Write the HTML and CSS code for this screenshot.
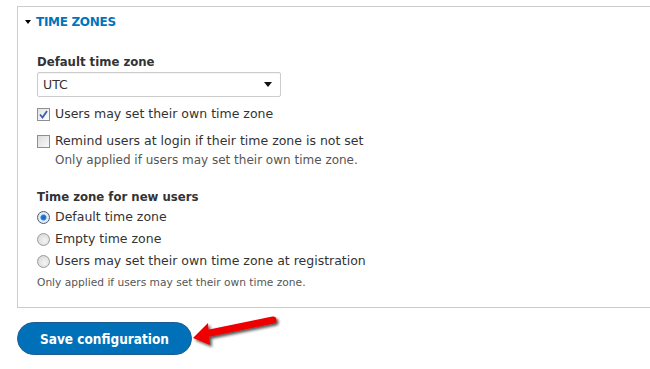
FILE: index.html
```html
<!DOCTYPE html>
<html>
<head>
<meta charset="utf-8">
<link rel="stylesheet" href="styles.css">
</head>
<body>
<div class="page">
  <div class="fieldset">
    <div class="legend"><span class="caret"></span><span class="legend-text">TIME ZONES</span></div>
    <div class="content">
      <div class="label">Default time zone</div>
      <div class="select"><span>UTC</span><span class="select-arrow"></span></div>
      <div class="option opt-first"><span class="checkbox checked"><svg width="9" height="9" viewBox="0 0 9 9"><path d="M1 4.5 L3.5 7.5 L8 1" fill="none" stroke="#3a5db0" stroke-width="1.8"/></svg></span>Users may set their own time zone</div>
      <div class="option opt-second"><span class="checkbox"></span>Remind users at login if their time zone is not set</div>
      <div class="desc indent">Only applied if users may set their own time zone.</div>
      <div class="label label-second">Time zone for new users</div>
      <div class="radio-row"><span class="radio selected"></span>Default time zone</div>
      <div class="radio-row"><span class="radio"></span>Empty time zone</div>
      <div class="radio-row"><span class="radio"></span>Users may set their own time zone at registration</div>
      <div class="desc desc-last">Only applied if users may set their own time zone.</div>
    </div>
  </div>
  <div class="actions">
    <button class="save">Save configuration</button>
    <svg class="arrow" width="100" height="50" viewBox="0 0 100 50">
      <defs>
        <filter id="sh" x="-20%" y="-20%" width="150%" height="160%">
          <feGaussianBlur in="SourceAlpha" stdDeviation="1.5"/>
          <feOffset dx="2" dy="2" result="b"/>
          <feComponentTransfer><feFuncA type="linear" slope="0.7"/></feComponentTransfer>
          <feMerge><feMergeNode/><feMergeNode in="SourceGraphic"/></feMerge>
        </filter>
      </defs>
      <g filter="url(#sh)">
        <path d="M17 21 L85 7" stroke="#ee0000" stroke-width="7" stroke-linecap="round" fill="none"/>
        <path d="M5 25 L20 10 L22 32 Z" fill="#ee0000"/>
      </g>
    </svg>
  </div>
</div>
</body>
</html>
```
FILE: styles.css
```css
html, body {
  margin: 0;
  padding: 0;
  background: #fff;
}
body {
  font-family: "DejaVu Sans", Verdana, sans-serif;
  color: #333;
  font-size: 12.5px;
}
.page {
  padding: 6px 0 0 17px;
}
.fieldset {
  border: 1px solid #cccccc;
  border-right: none;
  padding: 0 0 16px 0;
}
.legend {
  display: flex;
  align-items: center;
  height: 16px;
  margin-top: 7px;
  padding-left: 7px;
}
.caret {
  width: 0;
  height: 0;
  border-left: 3.5px solid transparent;
  border-right: 3.5px solid transparent;
  border-top: 4px solid #000;
  margin-right: 5px;
}
.legend-text {
  color: #0074bd;
  font-weight: bold;
  font-size: 12px;
  letter-spacing: -0.3px;
}
.content {
  padding-left: 19px;
}
.label {
  font-family: "DejaVu Sans Condensed", "DejaVu Sans", sans-serif;
  font-weight: bold;
  font-size: 13px;
  line-height: 18px;
  margin-top: 23px;
}
.label-second {
  margin-top: 20px;
}
.select {
  margin-top: 1px;
  height: 23px;
  border: 1px solid #cccccc;
  border-radius: 2px;
  display: flex;
  align-items: center;
  justify-content: space-between;
  padding: 0 8px 0 5px;
  box-sizing: content-box;
  width: 229px;
  box-shadow: inset 0 1px 1px rgba(0,0,0,0.04);
}
.select-arrow {
  width: 0;
  height: 0;
  border-left: 4px solid transparent;
  border-right: 4px solid transparent;
  border-top: 5px solid #111;
}
.option {
  display: flex;
  align-items: center;
  line-height: 20px;
}
.opt-first { margin-top: 7px; }
.opt-second { margin-top: 7px; }
.checkbox {
  width: 11px;
  height: 11px;
  border: 1px solid #8f8f8f;
  background: linear-gradient(135deg, #dcdcdc, #fafafa);
  margin-right: 5px;
  display: inline-flex;
  align-items: center;
  justify-content: center;
  flex: none;
}
.checkbox.checked {
  background: linear-gradient(135deg, #e4e4e4, #fdfdfd);
}
.desc {
  font-size: 12px;
  color: #555;
  line-height: 16px;
}
.indent {
  margin-left: 18px;
  margin-top: 1px;
}
.desc-last {
  font-size: 10.65px;
  margin-top: 3px;
}
.radio-row {
  display: flex;
  align-items: center;
  line-height: 22px;
}
.radio {
  width: 11px;
  height: 11px;
  border-radius: 50%;
  border: 1px solid #9a9a9a;
  background: radial-gradient(circle at 60% 60%, #f4f4f4, #d2d2d2);
  margin-right: 5px;
  flex: none;
  box-sizing: content-box;
}
.radio.selected {
  border-color: #4a5f76;
  background: radial-gradient(circle at 50% 50%, #1a5fb4 0, #2a7fd8 2.5px, #e8eef5 3.5px, #d7dde5 100%);
}
.actions {
  position: relative;
  margin-top: 14px;
}
.save {
  font-family: "DejaVu Sans Condensed", "DejaVu Sans", sans-serif;
  font-weight: bold;
  font-size: 13.5px;
  color: #fff;
  background: #0071b8;
  border: 1px solid #1e5c90;
  border-radius: 20px;
  height: 33px;
  width: 175px;
  padding: 0;
}
.arrow {
  position: absolute;
  left: 171px;
  top: -9px;
}
```
